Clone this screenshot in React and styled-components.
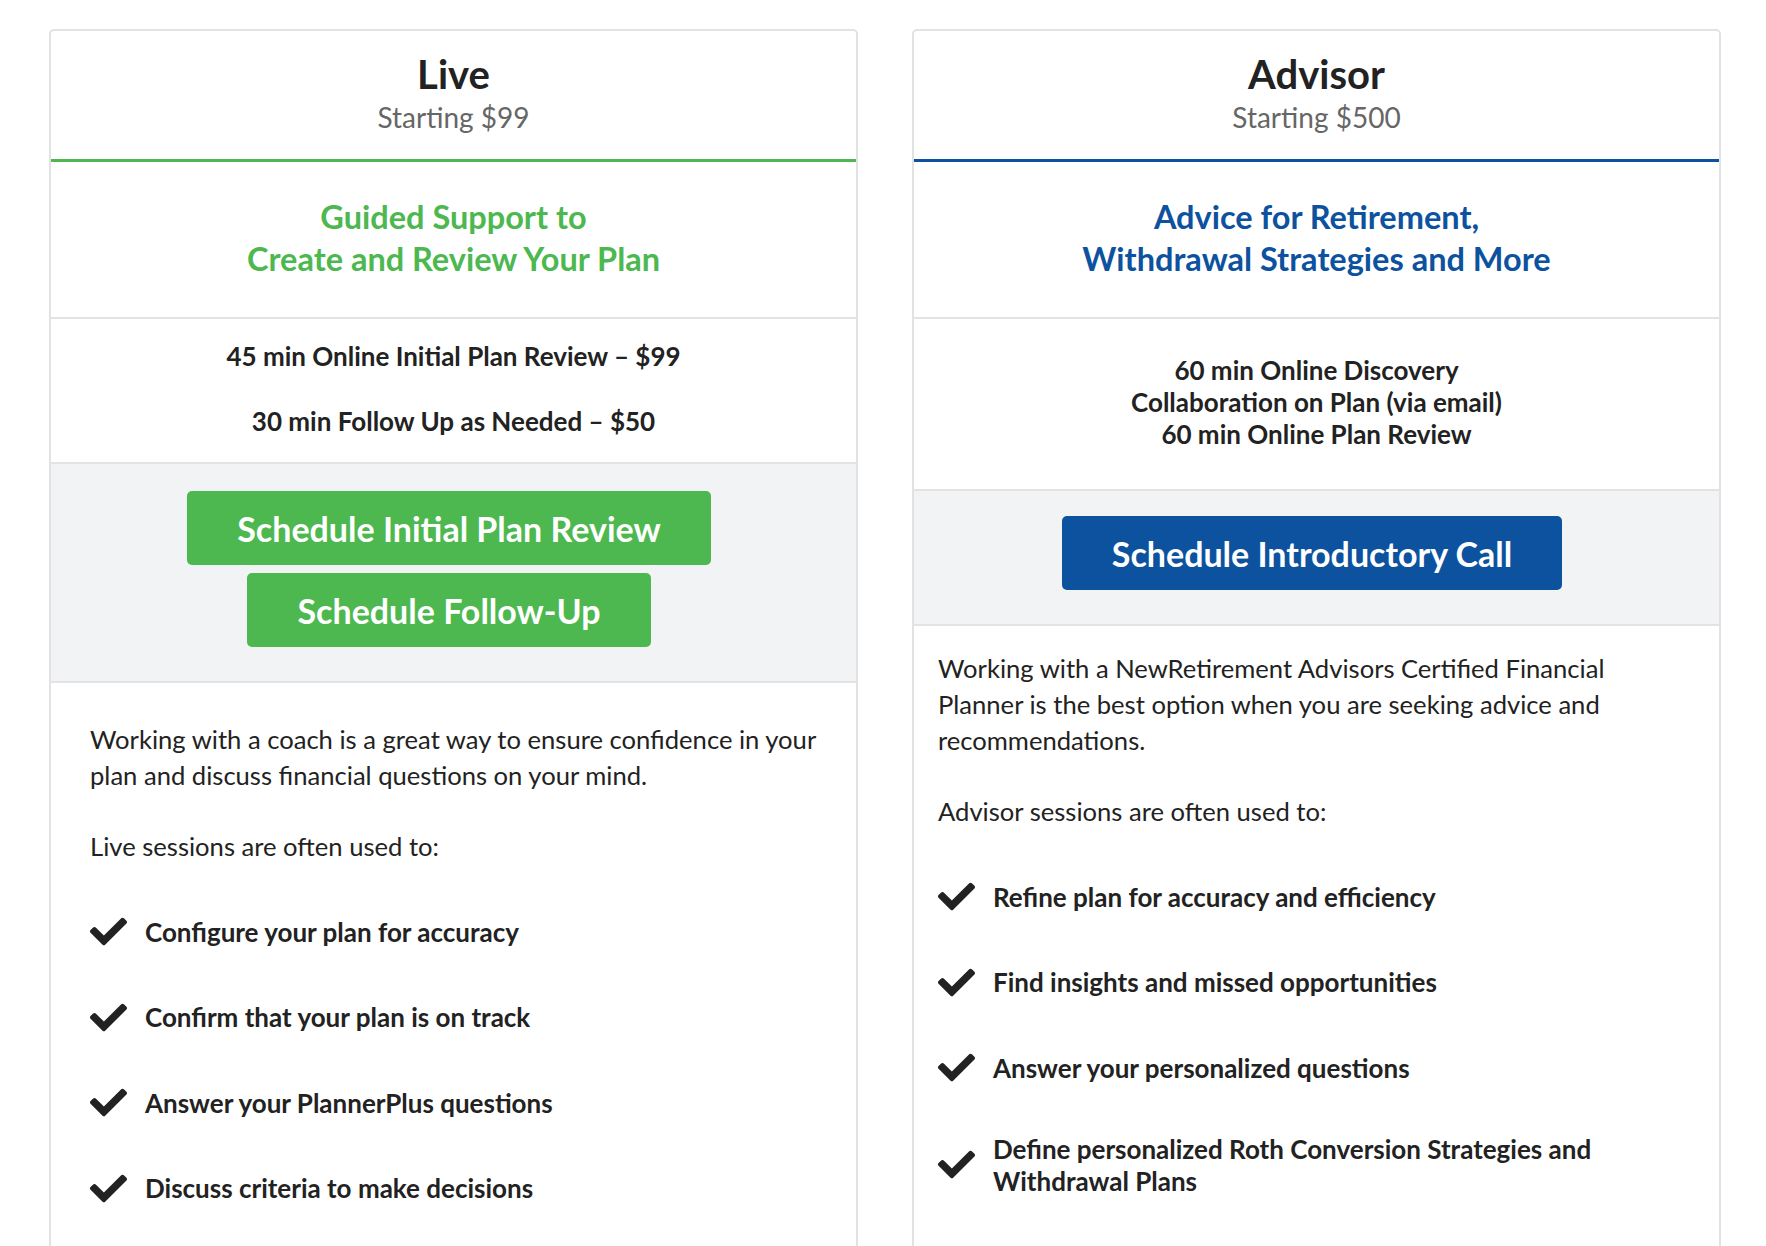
import React from 'react';
import styled, { createGlobalStyle } from 'styled-components';
import { FaCheck } from 'react-icons/fa';

const GREEN = '#4cb84f';
const BLUE = '#0d529e';
const LINE = '#e3e3e3';

const GlobalStyle = createGlobalStyle`
  html, body {
    margin: 0;
    padding: 0;
    background: #fff;
    overflow: hidden;
  }
  body {
    font-family: 'Lato', 'Liberation Sans', sans-serif;
    color: #222;
  }
`;

const Page = styled.div`
  display: flex;
  align-items: flex-start;
  gap: 54px;
  padding: 29px 0 0 49px;
`;

const Card = styled.div`
  width: 809px;
  box-sizing: border-box;
  border: 2px solid #e2e2e2;
  border-radius: 5px;
  background: #fff;
  overflow: hidden;
`;

const Header = styled.div`
  text-align: center;
  padding: 19px 0 26px;
  border-bottom: 3px solid ${p => p.$accent};
`;

const Title = styled.h2`
  margin: 0;
  font: 700 40px/48px 'Lato', sans-serif;
  color: #222;
`;

const Price = styled.div`
  margin-top: 3px;
  font: 400 28px/32px 'Lato', sans-serif;
  color: #666;
`;

const Tagline = styled.div`
  padding: 34px 20px 38px;
  text-align: center;
  font: 700 32.5px/41.6px 'Lato', sans-serif;
  color: ${p => p.$accent};
  border-bottom: 2px solid ${LINE};
`;

const Sessions = styled.div`
  padding: ${p => p.$pad};
  text-align: center;
  font: 700 26px/32px 'Lato', sans-serif;
  color: #222;
  border-bottom: 2px solid ${LINE};

  p {
    margin: 0;
  }
  p + p {
    margin-top: ${p => p.$spacing};
  }
`;

const Actions = styled.div`
  display: flex;
  flex-direction: column;
  align-items: center;
  padding: ${p => p.$top} 0 26px;
  background: #f2f3f5;
  border-bottom: 2px solid ${LINE};
`;

const Button = styled.button`
  display: inline-flex;
  align-items: center;
  justify-content: center;
  height: 74px;
  padding: 0 50px;
  margin: 0 9px 8px 0;
  border: none;
  border-radius: 5px;
  background: ${p => p.$accent};
  color: #fff;
  font: 700 34px 'Lato', sans-serif;
  cursor: pointer;
`;

const Body = styled.div`
  padding: ${p => p.$pad};
  padding-bottom: 200px;
  font: 400 25.6px/36px 'Lato', sans-serif;
  color: #222;
`;

const Para = styled.p`
  margin: 0 0 ${p => p.$gap || '35px'};
`;

const List = styled.ul`
  list-style: none;
  margin: 0;
  padding: 0;
`;

const Item = styled.li`
  display: flex;
  align-items: center;
  gap: 18px;
  min-height: 41px;
  margin-bottom: 44.5px;
  font: 700 26px/32px 'Lato', sans-serif;
  color: #222;

  svg {
    flex-shrink: 0;
    width: 37px;
    height: 37px;
    color: #222;
  }
`;

const plans = [
  {
    name: 'Live',
    price: 'Starting $99',
    accent: GREEN,
    tagline: ['Guided Support to', 'Create and Review Your Plan'],
    sessions: ['45 min Online Initial Plan Review – $99', '30 min Follow Up as Needed – $50'],
    sessionPad: '21px 20px 25px',
    sessionSpacing: '33px',
    actionsTop: '27px',
    buttons: ['Schedule Initial Plan Review', 'Schedule Follow-Up'],
    bodyPad: '38px 38px 0 39px',
    intro: 'Working with a coach is a great way to ensure confidence in your plan and discuss financial questions on your mind.',
    lead: 'Live sessions are often used to:',
    items: [
      'Configure your plan for accuracy',
      'Confirm that your plan is on track',
      'Answer your PlannerPlus questions',
      'Discuss criteria to make decisions',
    ],
  },
  {
    name: 'Advisor',
    price: 'Starting $500',
    accent: BLUE,
    tagline: ['Advice for Retirement,', 'Withdrawal Strategies and More'],
    sessions: ['60 min Online Discovery', 'Collaboration on Plan (via email)', '60 min Online Plan Review'],
    sessionPad: '35px 20px 39px',
    sessionSpacing: '0px',
    actionsTop: '25px',
    buttons: ['Schedule Introductory Call'],
    bodyPad: '24px 24px 0 24px',
    intro: 'Working with a NewRetirement Advisors Certified Financial Planner is the best option when you are seeking advice and recommendations.',
    lead: 'Advisor sessions are often used to:',
    items: [
      'Refine plan for accuracy and efficiency',
      'Find insights and missed opportunities',
      'Answer your personalized questions',
      'Define personalized Roth Conversion Strategies and Withdrawal Plans',
    ],
  },
];

function PlanCard({ plan }) {
  return (
    <Card>
      <Header $accent={plan.accent}>
        <Title>{plan.name}</Title>
        <Price>{plan.price}</Price>
      </Header>
      <Tagline $accent={plan.accent}>
        {plan.tagline[0]}
        <br />
        {plan.tagline[1]}
      </Tagline>
      <Sessions $pad={plan.sessionPad} $spacing={plan.sessionSpacing}>
        {plan.sessions.map(s => (
          <p key={s}>{s}</p>
        ))}
      </Sessions>
      <Actions $top={plan.actionsTop}>
        {plan.buttons.map(b => (
          <Button key={b} $accent={plan.accent}>{b}</Button>
        ))}
      </Actions>
      <Body $pad={plan.bodyPad}>
        <Para>{plan.intro}</Para>
        <Para $gap="47px">{plan.lead}</Para>
        <List>
          {plan.items.map(item => (
            <Item key={item}>
              <FaCheck />
              <span>{item}</span>
            </Item>
          ))}
        </List>
      </Body>
    </Card>
  );
}

export default function App() {
  return (
    <>
      <GlobalStyle />
      <Page>
        {plans.map(p => (
          <PlanCard key={p.name} plan={p} />
        ))}
      </Page>
    </>
  );
}
